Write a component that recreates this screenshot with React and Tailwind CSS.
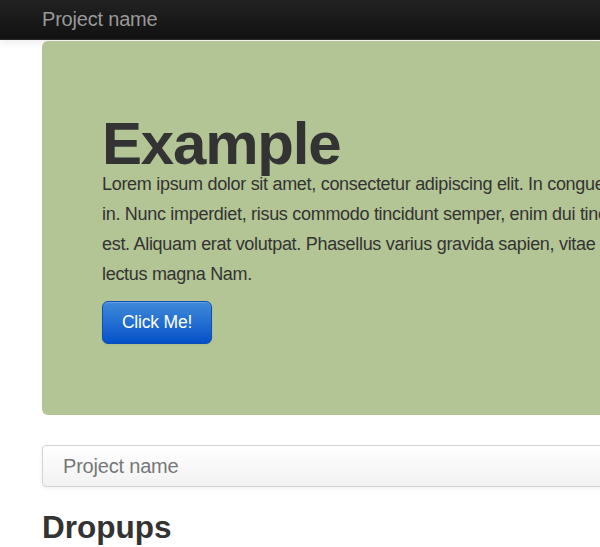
export default function App() {
  return (
    <div className="min-h-[547px] w-[600px] overflow-hidden bg-white font-['Liberation_Sans',Arial,sans-serif] text-[#333]">
      <div className="h-10 bg-gradient-to-b from-[#222] to-[#111] border-b border-[#252525] shadow-[0_1px_10px_rgba(0,0,0,0.1)]">
        <div className="ml-[42px] w-[940px]">
          <a className="block pt-[9px] text-[20px] leading-[20px] tracking-[-0.2px] text-[#999]">Project name</a>
        </div>
      </div>
      <div className="ml-[42px] w-[940px]">
        <div className="mt-px rounded-[6px] bg-[#b3c495] px-[60px] pt-[60px] pb-[71px]">
          <h1 className="mt-[18px] text-[60px] font-bold leading-[50px] tracking-[-1.2px] text-[#333]">Example</h1>
          <p className="mb-3 text-[18px] leading-[30px] tracking-[-0.3px] text-[#333]">
            Lorem ipsum dolor sit amet, consectetur adipiscing elit. In congue ligula vel nisi semper vehicula ut
            <br />
            in. Nunc imperdiet, risus commodo tincidunt semper, enim dui tincidunt nisl, sed placerat augue
            <br />
            est. Aliquam erat volutpat. Phasellus varius gravida sapien, vitae porta massa iaculis eget. Fusce
            <br />
            lectus magna Nam.
          </p>
          <button className="h-[43px] w-[110px] rounded-[6px] border border-[#0a4fb8] bg-gradient-to-b from-[#3f8ad8] to-[#0550c9] text-[17.5px] tracking-[-0.2px] text-white shadow-[inset_0_1px_0_rgba(255,255,255,0.2),0_1px_2px_rgba(0,0,0,0.05)]">
            Click Me!
          </button>
        </div>
        <div className="mt-[30px] h-[42px] rounded-[4px] border border-[#d4d4d4] bg-gradient-to-b from-white to-[#f2f2f2] shadow-[0_1px_4px_rgba(0,0,0,0.065)]">
          <a className="block pl-5 pt-[10px] text-[20px] leading-[20px] tracking-[-0.2px] text-[#777]">Project name</a>
        </div>
        <h2 className="mt-[20px] text-[31.5px] font-bold leading-[40px] text-[#333]">Dropups</h2>
      </div>
    </div>
  );
}
